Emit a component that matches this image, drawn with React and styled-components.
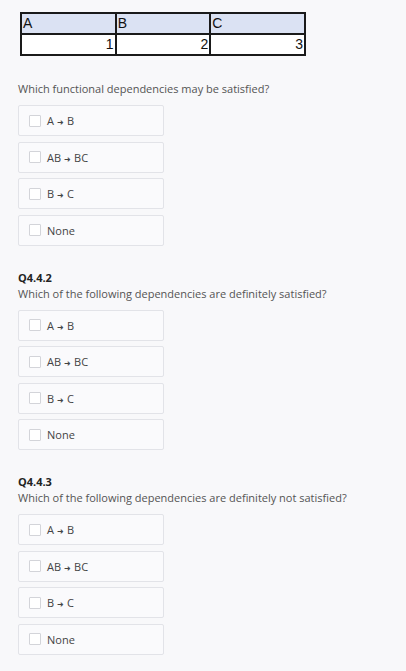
import styled, { createGlobalStyle } from 'styled-components';

const GlobalStyle = createGlobalStyle`
  body {
    margin: 0;
    background: #f8f8fa;
    font-family: 'Open Sans', Lato, sans-serif;
  }
`;

const Page = styled.div`
  padding: 12px 0 20px 18px;
`;

const Table = styled.table`
  margin-left: 2px;
  width: 286px;
  border-collapse: collapse;
  font-family: 'Liberation Sans', Arial, sans-serif;
  font-size: 14px;
  color: #111;
  table-layout: fixed;
`;

const Cell = styled.td`
  border: 2px solid #1a1a1a;
  height: 19px;
  padding: 0 1px;
  line-height: 19px;
  background: ${(pr) => (pr.head ? '#dbe2f3' : '#fff')};
  text-align: ${(pr) => (pr.head ? 'left' : 'right')};
`;

const Question = styled.section`
  margin-top: ${(pr) => pr.top};
`;

const Number = styled.div`
  font-size: 11px;
  font-weight: 700;
  color: #222;
  line-height: 17px;
`;

const Prompt = styled.div`
  font-size: 11px;
  color: #545454;
  line-height: 16px;
  margin-bottom: 8px;
`;

const Options = styled.div`
  display: flex;
  flex-direction: column;
  gap: 5.5px;
`;

const Option = styled.label`
  width: 146px;
  height: 31px;
  box-sizing: border-box;
  display: flex;
  align-items: center;
  gap: 6px;
  padding-left: 10px;
  border: 1px solid #e2e3e8;
  border-radius: 2px;
  background: #fafafc;
  font-size: 11px;
  color: #444;
`;

const Box = styled.span`
  width: 12px;
  height: 12px;
  box-sizing: border-box;
  border: 1px solid #d3d4d9;
  border-radius: 1px;
  background: #fff;
`;

const Arrow = styled.span`
  font-size: 8px;
  margin: 0 3px;
`;

const deps = [
  ['A', 'B'],
  ['AB', 'BC'],
  ['B', 'C'],
  null,
];

const OptionList = () => (
  <Options>
    {deps.map((d, i) => (
      <Option key={i}>
        <Box />
        {d ? (
          <span>
            {d[0]}
            <Arrow>➜</Arrow>
            {d[1]}
          </span>
        ) : (
          <span>None</span>
        )}
      </Option>
    ))}
  </Options>
);

const App = () => (
  <>
    <GlobalStyle />
    <Page>
      <Table>
        <tbody>
          <tr>
            <Cell head>A</Cell>
            <Cell head>B</Cell>
            <Cell head>C</Cell>
          </tr>
          <tr>
            <Cell>1</Cell>
            <Cell>2</Cell>
            <Cell>3</Cell>
          </tr>
        </tbody>
      </Table>

      <Question top="25px">
        <Prompt>Which functional dependencies may be satisfied?</Prompt>
        <OptionList />
      </Question>

      <Question top="23px">
        <Number>Q4.4.2</Number>
        <Prompt>Which of the following dependencies are definitely satisfied?</Prompt>
        <OptionList />
      </Question>

      <Question top="23px">
        <Number>Q4.4.3</Number>
        <Prompt>Which of the following dependencies are definitely not satisfied?</Prompt>
        <OptionList />
      </Question>
    </Page>
  </>
);

export default App;
